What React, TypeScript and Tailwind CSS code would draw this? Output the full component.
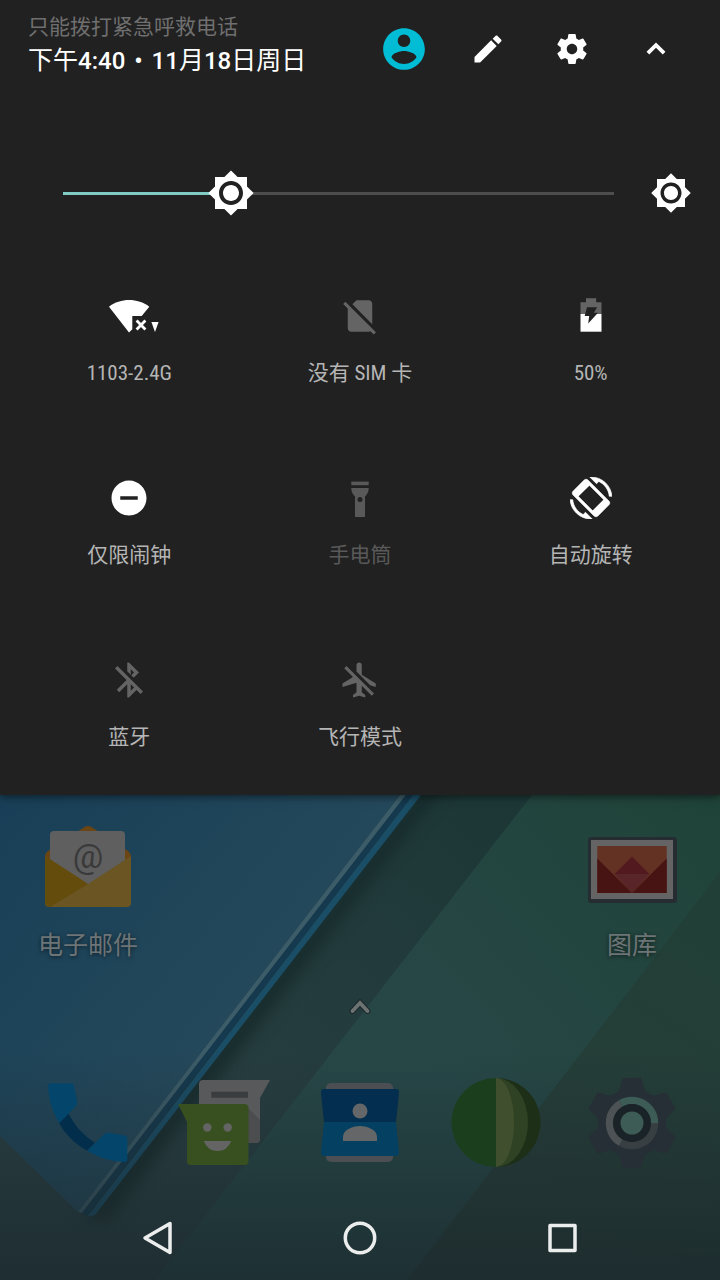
import React, { useState } from 'react';

interface IconProps {
  d: string;
  className?: string;
}

const Icon: React.FC<IconProps> = ({ d, className }) => (
  <svg className={className} viewBox="0 0 24 24" fill="currentColor" aria-hidden="true">
    <path d={d} />
  </svg>
);

const paths = {
  account:
    'M12 2C6.48 2 2 6.48 2 12s4.48 10 10 10 10-4.48 10-10S17.52 2 12 2zm0 3c1.66 0 3 1.34 3 3s-1.34 3-3 3-3-1.34-3-3 1.34-3 3-3zm0 14.2c-2.5 0-4.71-1.28-6-3.22.03-1.99 4-3.08 6-3.08 1.99 0 5.97 1.09 6 3.08-1.29 1.94-3.5 3.22-6 3.22z',
  edit: 'M3 17.25V21h3.75L17.81 9.94l-3.75-3.75L3 17.25zM20.71 7.04c.39-.39.39-1.02 0-1.41l-2.34-2.34c-.39-.39-1.02-.39-1.41 0l-1.83 1.83 3.75 3.75 1.83-1.83z',
  settings:
    'M19.43 12.98c.04-.32.07-.64.07-.98s-.03-.66-.07-.98l2.11-1.65c.19-.15.24-.42.12-.64l-2-3.46c-.12-.22-.39-.3-.61-.22l-2.49 1c-.52-.4-1.08-.73-1.69-.98l-.38-2.65C14.46 2.18 14.25 2 14 2h-4c-.25 0-.46.18-.49.42l-.38 2.65c-.61.25-1.17.59-1.69.98l-2.49-1c-.23-.09-.49 0-.61.22l-2 3.46c-.13.22-.07.49.12.64l2.11 1.65c-.04.32-.07.65-.07.98s.03.66.07.98l-2.11 1.65c-.19.15-.24.42-.12.64l2 3.46c.12.22.39.3.61.22l2.49-1c.52.4 1.08.73 1.69.98l.38 2.65c.03.24.24.42.49.42h4c.25 0 .46-.18.49-.42l.38-2.65c.61-.25 1.17-.59 1.69-.98l2.49 1c.23.09.49 0 .61-.22l2-3.46c.12-.22.07-.49-.12-.64l-2.11-1.65zM12 15.5c-1.93 0-3.5-1.57-3.5-3.5s1.57-3.5 3.5-3.5 3.5 1.57 3.5 3.5-1.57 3.5-3.5 3.5z',
  expandLess: 'M12 7.600l-6.300 6.300 1.800 1.800L12 11.200l4.500 4.500 1.800-1.800z',
  brightness:
    'M20 8.69V4h-4.69L12 .69 8.69 4H4v4.69L.69 12 4 15.31V20h4.69L12 23.31 15.31 20H20v-4.69L23.31 12 20 8.69zM12 18c-3.31 0-6-2.69-6-6s2.69-6 6-6 6 2.69 6 6-2.69 6-6 6zm0-10c-2.21 0-4 1.79-4 4s1.79 4 4 4 4-1.79 4-4-1.79-4-4-4z',
  noSim:
    'M18.99 5c0-1.1-.89-2-1.99-2h-7L7.66 5.34 19 16.68 18.99 5zM3.65 3.88L2.38 5.15 5 7.77V19c0 1.1.9 2 2 2h10.01c.35 0 .67-.1.96-.26l1.88 1.88 1.27-1.27L3.65 3.88z',
  dnd: 'M12 2C6.48 2 2 6.48 2 12s4.48 10 10 10 10-4.48 10-10S17.52 2 12 2zm5 11H7v-2h10v2z',
  rotate:
    'M16.48 2.52c3.27 1.55 5.61 4.72 5.97 8.48h1.5C23.44 4.84 18.29 0 12 0l-.66.03 3.81 3.81 1.33-1.32zm-6.25-.77c-.59-.59-1.54-.59-2.12 0L1.75 8.11c-.59.59-.59 1.54 0 2.12l12.02 12.02c.59.59 1.54.59 2.12 0l6.36-6.36c.59-.59.59-1.54 0-2.12L10.23 1.75zm4.6 19.44L2.81 9.17l6.36-6.36 12.02 12.02-6.36 6.36zm-7.31.29C4.25 19.94 1.91 16.76 1.55 13H.05C.56 19.16 5.71 24 12 24l.66-.03-3.81-3.81-1.33 1.32z',
  bluetooth:
    'M13 5.83l1.88 1.88-1.6 1.6 1.41 1.41 3.02-3.02L12 2h-1v5.03l2 2v-3.2zM5.41 4L4 5.41 10.59 12 5 17.59 6.41 19 11 14.41V22h1l4.29-4.29 2.3 2.29L20 18.59 5.41 4zM13 18.17v-3.76l1.88 1.88L13 18.17z',
  airplane:
    'M13 9V3.5c0-.83-.67-1.5-1.5-1.5S10 2.67 10 3.5v3.68l7.83 7.83L21 16v-2l-8-5zM3 5.27l4.99 4.99L2 14v2l8-2.5V19l-2 1.5V22l3.5-1 3.5 1v-1.5L13 19v-3.73L18.73 21 20 19.73 4.27 4 3 5.27z',
};

const WifiIcon = () => (
  <svg className="h-[42px] w-[60px]" viewBox="0 0 60 42" fill="currentColor" aria-hidden="true">
    <path d="M10 11.7C21.5 2.8 38.8 2.8 50.3 11.7L42.7 21H33.3v13.2L30 37.5z" />
    <path d="M37.6 25.6l8.8 8.8m0-8.8l-8.8 8.8" stroke="currentColor" strokeWidth="2.8" />
    <path d="M52.4 27h7.2L56 37z" />
  </svg>
);

const BatteryIcon = () => (
  <svg className="size-[42px]" viewBox="0 0 42 42" aria-hidden="true">
    <path d="M16 3.3h10.2v4h5.3V19h-21V7.300H16z" fill="#646464" />
    <path d="M10.500 19h21v17.700h-21z" fill="#fff" />
    <path d="M17 12.300h10.200l-3.400 5.400h4.200L18.200 28.600 19.200 21h-4.500z" fill="#212121" />
  </svg>
);

const FlashlightIcon = () => (
  <svg className="size-[42px]" viewBox="0 0 42 42" fill="currentColor" aria-hidden="true">
    <path d="M12.300 4.600h17.400v3.600H12.300z" />
    <path
      fillRule="evenodd"
      d="M12.300 11h17.400c0 4-1.300 6-3.700 8.400V40H16V19.400c-2.400-2.400-3.700-4.400-3.700-8.400zM21 20.100a2.500 2.500 0 100 5 2.500 2.500 0 000-5z"
    />
  </svg>
);

const RotateIcon = () => (
  <svg className="size-[42px]" viewBox="0 0 24 24" fill="currentColor" aria-hidden="true">
    <path d={paths.rotate} stroke="currentColor" strokeWidth="0.4" />
    <path d="M9.170 2.200L2.200 9.170l2.300 2.300 6.970-6.970zM21.800 14.830l-6.970 6.970-2.300-2.300 6.970-6.970z" />
  </svg>
);

interface Tile {
  label: string;
  icon: React.ReactNode;
  iconColor: string;
  labelColor: string;
}

const tiles: Tile[] = [
  { label: '1103-2.4G', icon: <WifiIcon />, iconColor: 'text-white', labelColor: 'text-[#b5b5b5]' },
  { label: '没有 SIM 卡', icon: <Icon d={paths.noSim} className="size-[42px]" />, iconColor: 'text-[#646464]', labelColor: 'text-[#b5b5b5]' },
  { label: '50%', icon: <BatteryIcon />, iconColor: 'text-white', labelColor: 'text-[#b5b5b5]' },
  { label: '仅限闹钟', icon: <Icon d={paths.dnd} className="size-[42px]" />, iconColor: 'text-white', labelColor: 'text-[#b5b5b5]' },
  { label: '手电筒', icon: <FlashlightIcon />, iconColor: 'text-[#595959]', labelColor: 'text-[#595959]' },
  { label: '自动旋转', icon: <RotateIcon />, iconColor: 'text-white', labelColor: 'text-[#b5b5b5]' },
  { label: '蓝牙', icon: <Icon d={paths.bluetooth} className="size-[42px]" />, iconColor: 'text-[#646464]', labelColor: 'text-[#b5b5b5]' },
  { label: '飞行模式', icon: <Icon d={paths.airplane} className="size-[42px]" />, iconColor: 'text-[#646464]', labelColor: 'text-[#b5b5b5]' },
];

// CJK characters in the clock line stay regular weight, digits are medium
const Han: React.FC<{ children: string }> = ({ children }) => (
  <span className="text-[25px] font-normal">{children}</span>
);

const Header = () => (
  <header className="flex h-[98px] items-center justify-between pl-7 pr-[22px]">
    <div className="pb-2">
      <p className="text-[21px] leading-8 text-[#6f6f6f]">只能拨打紧急呼救电话</p>
      <p className="text-2xl leading-9 font-medium text-white">
        <Han>下午</Han>4:40<span className="mx-[3px]"> • </span>11<Han>月</Han>18<Han>日周日</Han>
      </p>
    </div>
    <div className="flex text-white">
      <button type="button" aria-label="用户" className="flex h-[84px] w-[84px] items-center justify-center">
        <Icon d={paths.account} className="size-[50px] text-[#00bcd4]" />
      </button>
      <button type="button" aria-label="编辑" className="flex h-[84px] w-[84px] items-center justify-center">
        <Icon d={paths.edit} className="size-9" />
      </button>
      <button type="button" aria-label="设置" className="flex h-[84px] w-[84px] items-center justify-center">
        <Icon d={paths.settings} className="size-9" />
      </button>
      <button type="button" aria-label="收起" className="flex h-[84px] w-[84px] items-center justify-center">
        <Icon d={paths.expandLess} className="size-9" />
      </button>
    </div>
  </header>
);

const BrightnessSlider = () => {
  const [value, setValue] = useState(30.4);

  return (
    <div className="flex items-center gap-9 pt-[71px] pr-7 pb-8 pl-[63px]">
      <div className="relative flex h-12 flex-1 items-center">
        <div className="h-[3px] w-full bg-[#4d4d4d]">
          <div className="h-full bg-[#80cbc4]" style={{ width: `${value}%` }} />
        </div>
        <div className="absolute -translate-x-1/2 text-white" style={{ left: `${value}%` }}>
          <svg className="size-12" viewBox="0 0 24 24" fill="currentColor" aria-hidden="true">
            <circle cx="12" cy="12" r="7" fill="#212121" />
            <path d={paths.brightness} />
          </svg>
        </div>
        <input
          type="range"
          min={0}
          max={100}
          step={0.1}
          value={value}
          aria-label="亮度"
          className="absolute inset-0 w-full cursor-pointer opacity-0"
          onChange={(e) => setValue(Number(e.target.value))}
        />
      </div>
      <button type="button" aria-label="自动亮度" className="text-white">
        <Icon d={paths.brightness} className="size-[42px]" />
      </button>
    </div>
  );
};

const QuickTiles = () => (
  <div className="grid grid-cols-3 px-[14px]">
    {tiles.map((tile) => (
      <button key={tile.label} type="button" className="flex flex-col items-center gap-6 py-[46px]">
        <span className={tile.iconColor}>{tile.icon}</span>
        <span
          className={`font-['Roboto_Condensed','Liberation_Sans_Narrow',Roboto,'Noto_Sans_CJK_SC',sans-serif] text-[21px] leading-6 ${tile.labelColor}`}
        >
          {tile.label}
        </span>
      </button>
    ))}
  </div>
);

const Wallpaper = () => (
  <svg
    className="absolute inset-0 h-full w-full"
    viewBox="0 795 720 485"
    preserveAspectRatio="none"
    aria-hidden="true"
  >
    <defs>
      <linearGradient id="sheet" x1="0" y1="795" x2="260" y2="1010" gradientUnits="userSpaceOnUse">
        <stop offset="0" stopColor="#183f57" />
        <stop offset="1" stopColor="#25495b" />
      </linearGradient>
      <linearGradient id="teal" x1="720" y1="795" x2="430" y2="1060" gradientUnits="userSpaceOnUse">
        <stop offset="0" stopColor="#1f4338" />
        <stop offset="1" stopColor="#274747" />
      </linearGradient>
      <linearGradient id="deep" x1="450" y1="795" x2="180" y2="1150" gradientUnits="userSpaceOnUse">
        <stop offset="0" stopColor="#1d3737" />
        <stop offset="1" stopColor="#293f42" />
      </linearGradient>
      <linearGradient id="far" x1="720" y1="900" x2="520" y2="1200" gradientUnits="userSpaceOnUse">
        <stop offset="0" stopColor="#213f37" />
        <stop offset="1" stopColor="#273d39" />
      </linearGradient>
      <linearGradient id="fade" x1="0" y1="1050" x2="0" y2="1280" gradientUnits="userSpaceOnUse">
        <stop offset="0" stopColor="#1a262b" stopOpacity="0" />
        <stop offset="1" stopColor="#1a262b" stopOpacity="0.7" />
      </linearGradient>
      <filter id="soft" x="-20%" y="-20%" width="140%" height="140%" colorInterpolationFilters="sRGB">
        <feGaussianBlur stdDeviation="8" />
      </filter>
    </defs>
    <path d="M0 795h720v485H0z" fill="url(#deep)" />
    <path d="M532 795h188v485H155z" fill="url(#teal)" />
    <path d="M720 872v408H407z" fill="url(#far)" />
    <path d="M435 775l12 5L106 1222l-24-6z" fill="#142727" fillOpacity="0.85" filter="url(#soft)" />
    <path d="M0 795h400L78 1212 0 1136z" fill="url(#sheet)" />
    <path d="M400 795h6L82 1213l-4-1z" fill="#3c5c69" />
    <path d="M406 795h7L87 1216l-5-3z" fill="#15394e" />
    <path d="M413 795h8L95 1215l-8 2z" fill="#1a4d66" />
    <path d="M0 795h720v485H0z" fill="url(#fade)" />
  </svg>
);

const EmailIcon = () => (
  <svg className="size-24" viewBox="0 0 96 96" aria-hidden="true">
    <path d="M5 34q0-3 3-5L43 6q5-4 10 0l35 23q3 2 3 5v8H5z" fill="#6b4514" />
    <path d="M10 13q0-4 4-4h67q4 0 4 4v40L48 70 10 53z" fill="#5f5f60" />
    <text x="48" y="46" textAnchor="middle" fontSize="34" fill="#3a3a3a" className="font-[Roboto,sans-serif]">
      @
    </text>
    <path d="M5 34l43 28 43-28v47q0 4-4 4H9q-4 0-4-4z" fill="#6a5523" />
    <path d="M5 34l43 28L10 85q-5 0-5-4z" fill="#644c0d" />
  </svg>
);

const GalleryIcon = () => (
  <svg className="size-24" viewBox="0 0 96 96" aria-hidden="true">
    <rect x="4" y="15" width="89" height="66" rx="3" fill="#252d33" />
    <path d="M7 18h82v59H7z" fill="#646464" />
    <path d="M13.300 24h69.400v47H13.300z" fill="#633222" />
    <path d="M48 34.500L65.500 52h-35z" fill="#521a1f" />
    <path d="M30.500 52h35L48 71z" fill="#5a2529" />
    <path d="M13.300 36.500L48 71H13.300zM82.700 36.500L48 71h34.700z" fill="#471313" />
  </svg>
);

const PhoneIcon = () => (
  <svg className="size-24" viewBox="0 0 96 96" aria-hidden="true">
    <path d="M19 48l9.500-9.500C35 51 43 60 55 67.700l-8 8C34 68 25 59 19 48z" fill="#022e4b" />
    <path
      d="M10 8.300h21q2.600 0 3 2.700l3.300 16q.3 2.300-1.300 4L19.300 48C12 36 8.300 23 8.300 11q0-2.700 1.700-2.700zM47.300 75.700L64.500 59q1.800-1.800 4.500-1.200l15.500 2.700q2.800.4 2.800 3V84q0 3-3 3-19-.5-37-11.300z"
      fill="#04466b"
    />
  </svg>
);

const MessagesIcon = () => (
  <svg className="size-24" viewBox="0 0 96 96" aria-hidden="true">
    <path d="M27 5h67L84 23v41q0 4-4 4H23V9q0-4 4-4z" fill="#58595a" />
    <path d="M35.300 16.700H72v6H35.300z" fill="#3a3d3f" />
    <path d="M72 33l12 12v19q0 4-4 4h-8z" fill="#4b4d4f" />
    <path d="M2 29h66q4.500 0 4.500 4v53q0 4-4 4H15q-4 0-4-4V47z" fill="#385020" />
    <circle cx="31.300" cy="52.500" r="4.200" fill="#646464" />
    <circle cx="51.700" cy="52.500" r="4.200" fill="#646464" />
    <path d="M27.700 66h27.600q-4 10-13.800 10t-13.800-10z" fill="#646464" />
  </svg>
);

const ContactsIcon = () => (
  <svg className="size-24" viewBox="0 0 96 96" aria-hidden="true">
    <rect x="14" y="8" width="67" height="79" rx="5" fill="#4b4f53" />
    <path d="M12 14h72q3.500 0 3 4l-3 29H12L9 18q-.5-4 3-4z" fill="#032e4f" />
    <path d="M12 47h72l3 30q.5 4-3 4H12q-3.500 0-3-4z" fill="#044062" />
    <circle cx="48" cy="36" r="7.500" fill="#646667" />
    <path d="M31 66v-4c0-7 9-11 17-11s17 4 17 11v4z" fill="#646667" />
  </svg>
);

const MelonIcon = () => (
  <svg className="size-24" viewBox="0 0 96 96" aria-hidden="true">
    <path d="M48 3a44.500 44.500 0 000 89z" fill="#1b3f1c" />
    <path d="M48 3a44.500 44.500 0 010 89z" fill="#1e2f18" />
    <path d="M48 3a32 44.500 0 010 89z" fill="#2f4223" />
    <path d="M48 3a18 44.500 0 010 89z" fill="#40502f" />
  </svg>
);

const GearIcon = () => (
  <svg className="size-24" viewBox="-48 -48 96 96" aria-hidden="true">
    <g fill="#272f36">
      <circle r="34" />
      {[0, 60, 120, 180, 240, 300].map((angle) => (
        <path
          key={angle}
          d="M-17-29q4-2 5-6l2-8q.5-2 2.500-2h15q2 0 2.500 2l2 8q1 4 5 6z"
          transform={`rotate(${angle})`}
        />
      ))}
    </g>
    <g fill="none" strokeWidth="7.500">
      <path d="M22.500 0A22.500 22.500 0 01-11.250 19.490" stroke="#383f43" />
      <path d="M-11.250 19.490A22.500 22.500 0 01-11.250-19.490" stroke="#4d5254" />
      <path d="M-11.250-19.490A22.500 22.500 0 0122.500 0" stroke="#3c5c55" />
    </g>
    <circle r="19" fill="#1a2327" />
    <circle r="11.500" fill="#3c5c55" />
  </svg>
);

const apps = [
  { name: '电子邮件', icon: <EmailIcon /> },
  { name: '图库', icon: <GalleryIcon /> },
];

const dock = [
  { name: '电话', icon: <PhoneIcon /> },
  { name: '信息', icon: <MessagesIcon /> },
  { name: '通讯录', icon: <ContactsIcon /> },
  { name: '浏览器', icon: <MelonIcon /> },
  { name: '设置', icon: <GearIcon /> },
];

const HomeScreen = () => (
  <main className="relative flex flex-1 flex-col">
    <Wallpaper />
    <div className="relative flex justify-between px-5 pt-[27px]">
      {apps.map((app) => (
        <button key={app.name} type="button" className="flex w-[136px] flex-col items-center gap-3">
          {app.icon}
          <span className="text-[25px] leading-8 text-[#6d7476] [text-shadow:0_1px_4px_rgba(0,0,0,0.6)]">
            {app.name}
          </span>
        </button>
      ))}
    </div>
    <button type="button" aria-label="所有应用" className="relative mt-8 flex justify-center">
      <svg className="size-6" viewBox="0 0 24 24" fill="none" aria-hidden="true">
        <path d="M4.500 17l7.500-8 7.500 8" stroke="#1b2a2c" strokeWidth="6" strokeLinecap="round" />
        <path d="M4.500 17l7.500-8 7.500 8" stroke="#6d7272" strokeWidth="3.800" strokeLinecap="round" />
      </svg>
    </button>
    <div className="relative mt-[57px] grid grid-cols-5 px-5">
      {dock.map((app) => (
        <button key={app.name} type="button" aria-label={app.name} className="flex justify-center">
          {app.icon}
        </button>
      ))}
    </div>
    <nav className="relative mt-auto grid h-[84px] grid-cols-3 px-14">
      <button type="button" aria-label="返回" className="flex items-center justify-center">
        <svg className="size-9" viewBox="0 0 36 36" fill="none" stroke="#eceeee" strokeWidth="3.500" strokeLinejoin="round">
          <path d="M31 3.500v29L6 18z" />
        </svg>
      </button>
      <button type="button" aria-label="主屏幕" className="flex items-center justify-center">
        <svg className="size-9" viewBox="0 0 36 36" fill="none" stroke="#eceeee" strokeWidth="3.500">
          <circle cx="18" cy="18" r="14.700" />
        </svg>
      </button>
      <button type="button" aria-label="概览" className="flex items-center justify-center">
        <svg className="size-9" viewBox="0 0 36 36" fill="none" stroke="#eceeee" strokeWidth="3.500" strokeLinejoin="round">
          <path d="M5 5.500h25v25H5z" />
        </svg>
      </button>
    </nav>
  </main>
);

export default function App() {
  return (
    <div
      lang="zh-CN"
      className="flex min-h-screen flex-col bg-[#1f2f32] font-[Roboto,'Noto_Sans_CJK_SC',sans-serif]"
    >
      <section className="relative z-10 bg-[#212121] shadow-[0_2px_8px_rgba(0,0,0,0.5)]">
        <Header />
        <BrightnessSlider />
        <QuickTiles />
      </section>
      <HomeScreen />
    </div>
  );
}
